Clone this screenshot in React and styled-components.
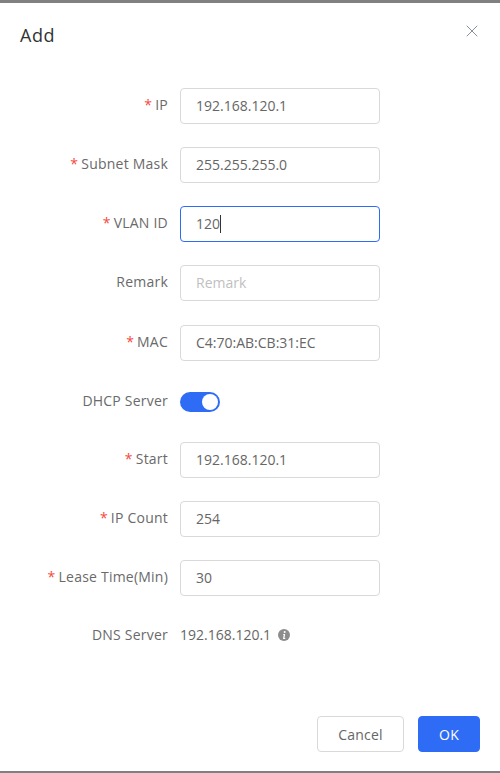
import React from "react";
import styled, { createGlobalStyle } from "styled-components";
import { X } from "lucide-react";

const GlobalStyle = createGlobalStyle`
  html, body {
    margin: 0;
    padding: 0;
    background: #fff;
  }
  body {
    font-family: "Open Sans", "Noto Sans", "Liberation Sans", sans-serif;
    overflow: hidden;
  }
`;

const Modal = styled.div`
  width: 500px;
  height: 773px;
  box-sizing: border-box;
  border-top: 3px solid #808080;
  border-bottom: 2px solid #808080;
  display: flex;
  flex-direction: column;
  background: #fff;
`;

const Header = styled.div`
  display: flex;
  justify-content: space-between;
  align-items: flex-start;
  height: 84.8px;
  padding: 20px 20px 0;
  box-sizing: border-box;
`;

const Title = styled.div`
  font-size: 18px;
  line-height: 25px;
  letter-spacing: 0.6px;
  color: #333;
`;

const CloseButton = styled.button`
  border: 0;
  background: none;
  padding: 0;
  display: flex;
  color: #8a8f99;
  margin: -2px -2px 0 0;
`;

const Form = styled.div`
  display: flex;
  flex-direction: column;
  flex: 1;
`;

const Row = styled.div`
  display: flex;
  align-items: center;
  height: ${(p) => p.$height || 36}px;
  margin-bottom: ${(p) => p.$gap ?? 23.2}px;
`;

const Label = styled.label`
  width: 168px;
  margin-right: 12px;
  text-align: right;
  font-size: 14px;
  letter-spacing: 0.22px;
  color: #6a6a6a;
  white-space: nowrap;
  position: relative;
  top: -1.4px;
`;

const Star = styled.span`
  color: #f5493d;
  margin-right: 3px;
`;

const Field = styled.div`
  width: 200px;
  height: 36px;
  box-sizing: border-box;
  border: 1px solid ${(p) => (p.$focused ? "#2f6cf6" : "#d9d9d9")};
  border-radius: 4px;
  padding: 0 15px 1px;
  display: flex;
  align-items: center;
  font-size: 14px;
  color: ${(p) => (p.$placeholder ? "#bfbfbf" : "#666")};
`;

const Caret = styled.span`
  display: inline-block;
  width: 1px;
  height: 18px;
  background: #333;
`;

const Toggle = styled.div`
  width: 40px;
  height: 20px;
  border-radius: 10px;
  background: #2f6cf6;
  display: flex;
  justify-content: flex-end;
  align-items: center;
  padding: 2px;
  box-sizing: border-box;
`;

const Knob = styled.div`
  width: 16px;
  height: 16px;
  border-radius: 50%;
  background: #fff;
`;

const StaticValue = styled.div`
  display: flex;
  align-items: center;
  gap: 7px;
  font-size: 14px;
  color: #666;
  position: relative;
  top: -1px;
`;

const InfoIcon = styled.svg`
  width: 12px;
  height: 12px;
  display: block;
`;

const Footer = styled.div`
  display: flex;
  justify-content: flex-end;
  gap: 14px;
  padding: 0 20px 19px;
`;

const Button = styled.button`
  height: 36px;
  width: ${(p) => p.$width}px;
  box-sizing: border-box;
  border-radius: 4px;
  border: 1px solid ${(p) => (p.$primary ? "#2f6cf6" : "#d9d9d9")};
  background: ${(p) => (p.$primary ? "#2f6cf6" : "#fff")};
  color: ${(p) => (p.$primary ? "#fff" : "#666")};
  font-family: inherit;
  font-size: 14px;
  letter-spacing: 0.2px;
  padding: 0;
`;

const fields = [
  { label: "IP", value: "192.168.120.1", required: true },
  { label: "Subnet Mask", value: "255.255.255.0", required: true },
  { label: "VLAN ID", value: "120", required: true, focused: true },
  { label: "Remark", placeholder: "Remark" },
  { label: "MAC", value: "C4:70:AB:CB:31:EC", required: true },
  { label: "DHCP Server", toggle: true },
  { label: "Start", value: "192.168.120.1", required: true },
  { label: "IP Count", value: "254", required: true },
  { label: "Lease Time(Min)", value: "30", required: true },
];

const App = () => {
  return (
    <>
      <GlobalStyle />
      <Modal>
        <Header>
          <Title>Add</Title>
          <CloseButton aria-label="Close">
            <X size={20} strokeWidth={1.2} />
          </CloseButton>
        </Header>
        <Form>
          {fields.map((f) => (
            <Row key={f.label} $gap={f.toggle ? 22 : undefined}>
              <Label>
                {f.required && <Star>*</Star>}
                {f.label}
              </Label>
              {f.toggle ? (
                <Toggle>
                  <Knob />
                </Toggle>
              ) : (
                <Field $focused={f.focused} $placeholder={!f.value}>
                  {f.value || f.placeholder}
                  {f.focused && <Caret />}
                </Field>
              )}
            </Row>
          ))}
          <Row $height={33} $gap={0}>
            <Label>DNS Server</Label>
            <StaticValue>
              192.168.120.1
              <InfoIcon viewBox="0 0 12 12">
                <circle cx="6" cy="6" r="6" fill="#8c8c8c" />
                <circle cx="6.7" cy="3.1" r="1" fill="#fff" />
                <path d="M5.3 5h1.9L6.5 9.1h.8L7.2 10H5l.7-4.1h-.5z" fill="#fff" />
              </InfoIcon>
            </StaticValue>
          </Row>
        </Form>
        <Footer>
          <Button $width={87}>Cancel</Button>
          <Button $primary $width={62}>OK</Button>
        </Footer>
      </Modal>
    </>
  );
};

export default App;
